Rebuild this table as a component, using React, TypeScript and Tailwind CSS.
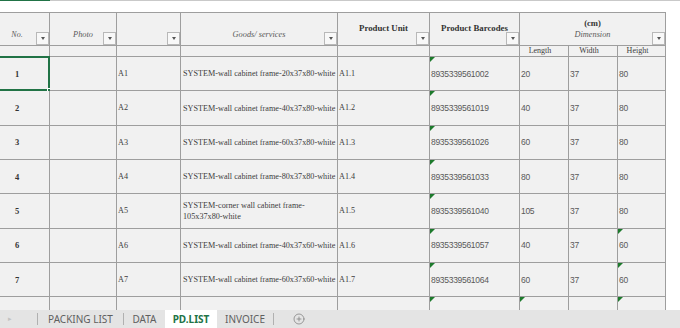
import React from "react";
import { CirclePlus } from "lucide-react";

type Row = {
  n: number;
  a: string;
  g: React.ReactNode;
  u: string;
  b: string;
  l: string;
  w: string;
  h: string;
  lt?: boolean;
  ht?: boolean;
};

const rows: Row[] = [
  { n: 1, a: "A1", g: "SYSTEM-wall cabinet frame-20x37x80-white", u: "A1.1", b: "8935339561002", l: "20", w: "37", h: "80" },
  { n: 2, a: "A2", g: "SYSTEM-wall cabinet frame-40x37x80-white", u: "A1.2", b: "8935339561019", l: "40", w: "37", h: "80" },
  { n: 3, a: "A3", g: "SYSTEM-wall cabinet frame-60x37x80-white", u: "A1.3", b: "8935339561026", l: "60", w: "37", h: "80" },
  { n: 4, a: "A4", g: "SYSTEM-wall cabinet frame-80x37x80-white", u: "A1.4", b: "8935339561033", l: "80", w: "37", h: "80" },
  {
    n: 5,
    a: "A5",
    g: (
      <>
        SYSTEM-corner wall cabinet frame-
        <br />
        105x37x80-white
      </>
    ),
    u: "A1.5",
    b: "8935339561040",
    l: "105",
    w: "37",
    h: "80",
  },
  { n: 6, a: "A6", g: "SYSTEM-wall cabinet frame-40x37x60-white", u: "A1.6", b: "8935339561057", l: "40", w: "37", h: "60", ht: true },
  { n: 7, a: "A7", g: "SYSTEM-wall cabinet frame-60x37x60-white", u: "A1.7", b: "8935339561064", l: "60", w: "37", h: "60", ht: true },
];

const cell = "relative border-r border-b border-[#9e9e9e] bg-[#f1f1f1]";
const serif = "font-['Liberation_Serif',serif]";
const sans = "font-['Liberation_Sans',sans-serif] text-[8.5px] tracking-[-0.3px] text-[#595959]";

function Dd() {
  return (
    <div className="absolute right-0 bottom-0 w-[13px] h-[13px] bg-[#f8f8f8] border border-[#b8b8b8] flex items-center justify-center">
      <div className="w-0 h-0 border-l-[2.5px] border-r-[2.5px] border-t-[3px] border-l-transparent border-r-transparent border-t-[#555555]" />
    </div>
  );
}

function Tri() {
  return (
    <div className="absolute top-0 left-0 w-0 h-0 border-t-[5px] border-r-[5px] border-t-[#1d7a2c] border-r-transparent" />
  );
}

export default function App() {
  return (
    <div className="w-[680px] h-[328px] flex flex-col bg-white overflow-hidden">
      <div className="h-px flex shrink-0">
        <div className="w-[50px] bg-[#217346]" />
        <div className="flex-1 bg-[#c9c9c9]" />
      </div>
      <div className="h-[11px] shrink-0" />
      <div className="h-[298px] shrink-0 overflow-hidden">
        <div className="grid w-[666px] grid-cols-[50px_67px_64px_157px_92px_90px_49px_49px_48px] grid-rows-[33px_11px_repeat(8,34.33px)] border-t border-[#9e9e9e]">
          {/* header row 1 */}
          <div className={`${cell} flex items-end justify-center pr-[15px] pb-[4px] ${serif} italic text-[8px] text-[#595959]`}>
            No.
            <Dd />
          </div>
          <div className={`${cell} flex items-end justify-center pb-[4px] ${serif} italic text-[8.3px] text-[#595959]`}>
            Photo
            <Dd />
          </div>
          <div className={cell}>
            <Dd />
          </div>
          <div className={`${cell} flex items-end justify-center pb-[4px] ${serif} italic text-[8.3px] text-[#595959]`}>
            Goods/ services
            <Dd />
          </div>
          <div className={`${cell} flex items-center justify-center ${serif} font-bold text-[8.8px] text-[#333333]`}>
            Product Unit
            <Dd />
          </div>
          <div className={`${cell} flex items-center justify-center ${serif} font-bold text-[8.8px] text-[#333333]`}>
            Product Barcodes
            <Dd />
          </div>
          <div className={`${cell} col-span-3 flex flex-col items-center justify-center ${serif} leading-[12px]`}>
            <span className="font-bold text-[8.6px] text-[#333333]">(cm)</span>
            <span className="italic text-[8.3px] text-[#595959]">Dimension</span>
            <Dd />
          </div>

          {/* header row 2 */}
          <div className={cell} />
          <div className={cell} />
          <div className={cell} />
          <div className={cell} />
          <div className={cell} />
          <div className={cell} />
          {["Length", "Width", "Height"].map((t) => (
            <div key={t} className={`${cell} flex items-center justify-center pr-2 ${serif} text-[8px] text-[#404040]`}>
              {t}
            </div>
          ))}

          {/* data rows */}
          {rows.map((r) => (
            <React.Fragment key={r.n}>
              <div className={`${cell} flex items-center justify-center pr-[15px] pt-px ${serif} font-bold text-[8.5px] text-[#333333]`}>
                {r.n}
                {r.n === 1 && (
                  <>
                    <div className="absolute left-[-2px] top-[-1px] right-[-1px] bottom-[-1px] border-2 border-[#217346]" />
                    <div className="absolute right-[-3px] bottom-[-3px] w-[5px] h-[5px] bg-[#217346] border border-white" />
                  </>
                )}
              </div>
              <div className={cell} />
              <div className={`${cell} flex items-center pl-px pt-px ${serif} text-[8.2px] text-[#404040]`}>{r.a}</div>
              <div className={`${cell} flex items-center pl-[2px] pt-px ${serif} text-[8.2px] leading-[11.7px] text-[#404040] whitespace-nowrap`}>
                <span>{r.g}</span>
              </div>
              <div className={`${cell} flex items-center pl-px pt-px ${serif} text-[8.2px] text-[#404040]`}>{r.u}</div>
              <div className={`${cell} flex items-center pl-px pt-px ${sans}`}>
                <Tri />
                {r.b}
              </div>
              <div className={`${cell} flex items-center pl-px pt-px ${sans}`}>
                {r.lt && <Tri />}
                {r.l}
              </div>
              <div className={`${cell} flex items-center pl-px pt-px ${sans}`}>{r.w}</div>
              <div className={`${cell} flex items-center pl-px pt-px ${sans}`}>
                {r.ht && <Tri />}
                {r.h}
              </div>
            </React.Fragment>
          ))}

          {/* partial row */}
          <div className={cell} />
          <div className={cell} />
          <div className={cell} />
          <div className={cell} />
          <div className={cell} />
          <div className={cell}>
            <Tri />
          </div>
          <div className={cell}>
            <Tri />
          </div>
          <div className={cell} />
          <div className={cell}>
            <Tri />
          </div>
        </div>
      </div>

      <div className="h-[18px] shrink-0 bg-[#e4e4e4] flex items-center font-['Noto_Sans',sans-serif] text-[10px] text-[#5f5f5f]">
        <div className="w-[37px] flex items-center pl-[8px] text-[7px] text-[#c2c2c2]">▸</div>
        <div className="w-px h-[12px] bg-[#b0b0b0]" />
        <div className="w-[85px] text-center">PACKING LIST</div>
        <div className="w-px h-[12px] bg-[#b0b0b0]" />
        <div className="w-[41px] text-center">DATA</div>
        <div className="w-[52px] self-stretch bg-white flex items-center justify-center font-bold text-[#217346]">PD.LIST</div>
        <div className="w-[56px] text-center">INVOICE</div>
        <div className="w-px h-[12px] bg-[#b0b0b0]" />
        <div className="ml-[19px] flex items-center text-[#777777]">
          <CirclePlus size={12} strokeWidth={1.4} />
        </div>
      </div>
    </div>
  );
}
